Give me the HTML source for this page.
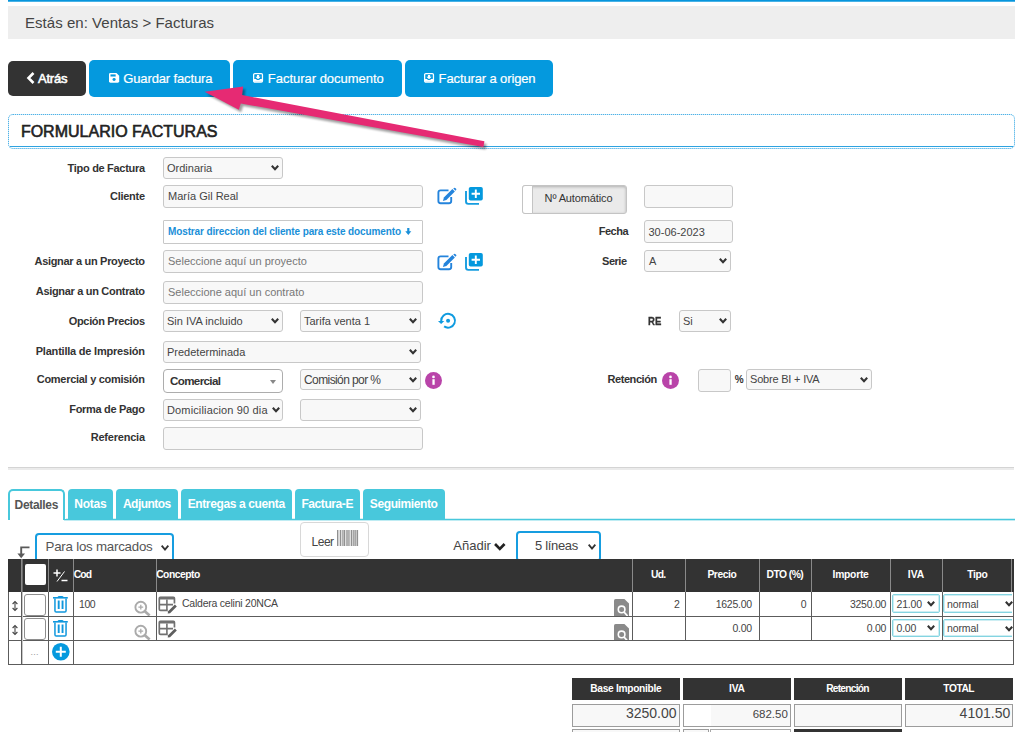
<!DOCTYPE html>
<html lang="es">
<head>
<meta charset="utf-8">
<title>Formulario Facturas</title>
<style>
*{box-sizing:border-box;margin:0;padding:0}
html,body{width:1024px;height:732px;overflow:hidden;background:#fff}
body{font-family:"Liberation Sans",sans-serif;color:#444;position:relative}
.a{position:absolute}
.t{position:absolute;white-space:nowrap;line-height:1}
svg{display:block;overflow:visible}
</style>
</head>
<body>

<div class="a" style="left:8px;top:0px;width:1007px;height:1px;background:#0795dc"></div>
<div class="a" style="left:8px;top:1px;width:1007px;height:1px;background:#47b2e6"></div>
<div class="a" style="left:8px;top:6px;width:1007px;height:33px;background:#eee"></div>
<div class="t" id="crumbtxt" style="top:14.70px;font-size:15px;color:#444;letter-spacing:0.038px;left:25px;">Estás en: Ventas &gt; Facturas</div>
<div class="a" style="left:8px;top:61px;width:78px;height:35px;background:#333;border-radius:5px"></div>
<div class="a" style="left:89px;top:60px;width:141px;height:37px;background:#0499de;border-radius:5px"></div>
<div class="a" style="left:233px;top:60px;width:169px;height:37px;background:#0499de;border-radius:5px"></div>
<div class="a" style="left:405px;top:60px;width:148px;height:37px;background:#0499de;border-radius:5px"></div>
<svg class="a" style="left:26px;top:72px;width:9px;height:12px" viewBox="0 0 9 12"><path d="M7.5 1 L2.5 6 L7.5 11" fill="none" stroke="#fff" stroke-width="2.6"/></svg>
<div class="t" id="b0" style="top:72.00px;font-size:13px;color:#fff;letter-spacing:-0.211px;left:38px;-webkit-text-stroke:0.55px #fff;">Atrás</div>
<svg class="a" style="left:108.6px;top:72.8px;width:10.2px;height:9.7px" viewBox="0 0 11 11" preserveAspectRatio="none"><path d="M1.5 0 H8 L11 3 V9.5 Q11 11 9.5 11 H1.5 Q0 11 0 9.5 V1.5 Q0 0 1.5 0 Z" fill="#fff"/><rect x="1.6" y="1.6" width="5.6" height="2.4" fill="#0499de"/><circle cx="5.5" cy="7.4" r="1.7" fill="#0499de"/></svg>
<div class="t" id="b1" style="top:71.70px;font-size:13px;color:#fff;letter-spacing:-0.128px;left:123.25px;-webkit-text-stroke:0.2px #fff;">Guardar factura</div>
<svg class="a" style="left:253.1px;top:72.9px;width:10.1px;height:9.7px" viewBox="0 0 11 11" preserveAspectRatio="none"><rect x="0.7" y="0.7" width="9.6" height="9.6" rx="1.3" fill="none" stroke="#fff" stroke-width="1.4"/><path d="M5.5 7.2 L2.6 4.2 H4.3 V2.4 H6.7 V4.2 H8.4 Z" fill="#fff"/><path d="M1 6.8 H3.4 L4.2 8 H6.8 L7.6 6.8 H10 V10 H1 Z" fill="#fff"/></svg>
<div class="t" id="b2" style="top:71.70px;font-size:13px;color:#fff;letter-spacing:-0.02px;left:267.8px;-webkit-text-stroke:0.2px #fff;">Facturar documento</div>
<svg class="a" style="left:424.2px;top:72.9px;width:10.1px;height:9.7px" viewBox="0 0 11 11" preserveAspectRatio="none"><rect x="0.7" y="0.7" width="9.6" height="9.6" rx="1.3" fill="none" stroke="#fff" stroke-width="1.4"/><path d="M5.5 7.2 L2.6 4.2 H4.3 V2.4 H6.7 V4.2 H8.4 Z" fill="#fff"/><path d="M1 6.8 H3.4 L4.2 8 H6.8 L7.6 6.8 H10 V10 H1 Z" fill="#fff"/></svg>
<div class="t" id="b3" style="top:71.70px;font-size:13px;color:#fff;letter-spacing:-0.125px;left:438.6px;-webkit-text-stroke:0.2px #fff;">Facturar a origen</div>
<div class="a" style="left:8px;top:114px;width:1007px;height:35px;border:1px solid rgba(70,175,232,0.28);border-radius:5px;"></div>
<div class="a" style="left:8px;top:114px;width:1007px;height:35px;border:1px dotted #4fb2e6;border-radius:5px;"></div>
<div class="a" style="left:10px;top:146px;width:1003px;height:1px;background:#2fa3e0"></div>
<div class="t" id="formtitle" style="top:123.96px;font-size:16px;color:#222;letter-spacing:0.007px;left:20.9px;-webkit-text-stroke:0.6px #222;">FORMULARIO FACTURAS</div>
<svg class="a" style="left:0;top:0;width:1024px;height:200px" viewBox="0 0 1024 200"><path d="M204.6 91.8 L243.1 86.4 L242.2 95 L484.4 141.3 L483.4 146.9 L240.8 103.4 L238.8 109.7 Z" fill="#000" opacity="0.38" transform="translate(2.3,2.6)" style="filter:blur(1.2px)"/><path d="M204.6 91.8 L243.1 86.4 L242.2 95 L484.4 141.3 L483.4 146.9 L240.8 103.4 L238.8 109.7 Z" fill="#e62a73"/></svg>
<div class="t" style="top:162.69px;font-size:11px;color:#333;font-weight:bold;letter-spacing:-0.307px;right:879.307px;">Tipo de Factura</div>
<div class="a" style="left:163px;top:157px;width:120px;height:22px;background:#f8f8f8;border:1px solid #c8c8c8;border-radius:3px;"></div>
<div class="t" style="top:162.65px;font-size:11px;color:#444;letter-spacing:0px;left:167px;">Ordinaria</div>
<svg class="a" style="left:270.50px;top:165.40px;width:8px;height:5.2px" viewBox="0 0 8 5.2"><path d="M0.80 0.80 L4.00 4.16 L7.20 0.80" fill="none" stroke="#333" stroke-width="2.1"/></svg>
<div class="t" style="top:190.69px;font-size:11px;color:#333;font-weight:bold;letter-spacing:-0.279px;right:879.279px;">Cliente</div>
<div class="a" style="left:163px;top:185px;width:260px;height:23px;background:#f8f8f8;border:1px solid #c8c8c8;border-radius:3px;"></div>
<div class="t" style="top:191.15px;font-size:11px;color:#444;letter-spacing:0px;left:168px;">María Gil Real</div>
<div class="a" style="left:163px;top:220px;width:260px;height:24px;background:#fff;border:1px solid #c8c8c8;border-radius:1px;"></div>
<div class="t" style="top:227.13px;font-size:10px;color:#1a8fd8;font-weight:bold;letter-spacing:-0.124px;left:168px;">Mostrar direccion del cliente para este documento</div>
<svg class="a" style="left:405px;top:228.3px;width:6.6px;height:7px" viewBox="0 0 6 7"><path d="M3 0 V4" stroke="#1a8fd8" stroke-width="2.2"/><path d="M0 3.2 H6 L3 7 Z" fill="#1a8fd8"/></svg>
<div class="t" style="top:255.69px;font-size:11px;color:#333;font-weight:bold;letter-spacing:-0.313px;right:879.313px;">Asignar a un Proyecto</div>
<div class="a" style="left:163px;top:250px;width:260px;height:23px;background:#f8f8f8;border:1px solid #c8c8c8;border-radius:3px;"></div>
<div class="t" style="top:256.15px;font-size:11px;color:#777;letter-spacing:0px;left:168px;">Seleccione aquí un proyecto</div>
<div class="t" style="top:286.44px;font-size:11px;color:#333;font-weight:bold;letter-spacing:-0.313px;right:879.313px;">Asignar a un Contrato</div>
<div class="a" style="left:163px;top:281px;width:260px;height:23px;background:#f8f8f8;border:1px solid #c8c8c8;border-radius:3px;"></div>
<div class="t" style="top:287.15px;font-size:11px;color:#777;letter-spacing:0px;left:168px;">Seleccione aquí un contrato</div>
<div class="t" style="top:315.69px;font-size:11px;color:#333;font-weight:bold;letter-spacing:-0.342px;right:879.342px;">Opción Precios</div>
<div class="a" style="left:163px;top:310px;width:120px;height:22px;background:#f8f8f8;border:1px solid #c8c8c8;border-radius:3px;"></div>
<div class="t" style="top:315.65px;font-size:11px;color:#444;letter-spacing:0px;left:167px;">Sin IVA incluido</div>
<svg class="a" style="left:270.50px;top:318.40px;width:8px;height:5.2px" viewBox="0 0 8 5.2"><path d="M0.80 0.80 L4.00 4.16 L7.20 0.80" fill="none" stroke="#333" stroke-width="2.1"/></svg>
<div class="a" style="left:300px;top:310px;width:121px;height:22px;background:#f8f8f8;border:1px solid #c8c8c8;border-radius:3px;"></div>
<div class="t" style="top:315.65px;font-size:11px;color:#444;letter-spacing:0px;left:304px;">Tarifa venta 1</div>
<svg class="a" style="left:408.50px;top:318.40px;width:8px;height:5.2px" viewBox="0 0 8 5.2"><path d="M0.80 0.80 L4.00 4.16 L7.20 0.80" fill="none" stroke="#333" stroke-width="2.1"/></svg>
<div class="t" style="top:346.44px;font-size:11px;color:#333;font-weight:bold;letter-spacing:-0.212px;right:879.212px;">Plantilla de Impresión</div>
<div class="a" style="left:163px;top:341px;width:258px;height:22px;background:#f8f8f8;border:1px solid #c8c8c8;border-radius:3px;"></div>
<div class="t" style="top:346.65px;font-size:11px;color:#444;letter-spacing:0px;left:167px;">Predeterminada</div>
<svg class="a" style="left:408.50px;top:349.40px;width:8px;height:5.2px" viewBox="0 0 8 5.2"><path d="M0.80 0.80 L4.00 4.16 L7.20 0.80" fill="none" stroke="#333" stroke-width="2.1"/></svg>
<div class="t" style="top:373.94px;font-size:11px;color:#333;font-weight:bold;letter-spacing:-0.287px;right:879.287px;">Comercial y comisión</div>
<div class="a" style="left:163px;top:369px;width:120px;height:24px;background:#fff;border:1px solid #adadad;border-radius:4px"></div>
<div class="t" style="top:375.18px;font-size:11.6px;color:#333;font-weight:bold;letter-spacing:-0.636px;left:170px;">Comercial</div>
<svg class="a" style="left:270px;top:379.5px;width:6px;height:4px" viewBox="0 0 6 4"><path d="M0 0 H6 L3 4 Z" fill="#888"/></svg>
<div class="a" style="left:300px;top:369px;width:121px;height:21px;background:#f8f8f8;border:1px solid #c8c8c8;border-radius:3px;"></div>
<div class="t" style="top:373.84px;font-size:12px;color:#444;letter-spacing:-0.592px;left:304px;">Comisión por %</div>
<svg class="a" style="left:408.50px;top:376.90px;width:8px;height:5.2px" viewBox="0 0 8 5.2"><path d="M0.80 0.80 L4.00 4.16 L7.20 0.80" fill="none" stroke="#333" stroke-width="2.1"/></svg>
<div class="t" style="top:404.44px;font-size:11px;color:#333;font-weight:bold;letter-spacing:-0.309px;right:879.309px;">Forma de Pago</div>
<div class="a" style="left:163px;top:399px;width:120px;height:22px;background:#f8f8f8;border:1px solid #c8c8c8;border-radius:3px;"></div>
<div class="t" style="top:404.65px;font-size:11px;color:#444;letter-spacing:0.141px;left:167px;">Domiciliacion 90 dia</div>
<svg class="a" style="left:271.50px;top:407.40px;width:8px;height:5.2px" viewBox="0 0 8 5.2"><path d="M0.80 0.80 L4.00 4.16 L7.20 0.80" fill="none" stroke="#333" stroke-width="2.1"/></svg>
<div class="a" style="left:300px;top:399px;width:121px;height:22px;background:#f8f8f8;border:1px solid #c8c8c8;border-radius:3px;"></div>
<svg class="a" style="left:408.50px;top:407.40px;width:8px;height:5.2px" viewBox="0 0 8 5.2"><path d="M0.80 0.80 L4.00 4.16 L7.20 0.80" fill="none" stroke="#333" stroke-width="2.1"/></svg>
<div class="t" style="top:431.94px;font-size:11px;color:#333;font-weight:bold;letter-spacing:-0.223px;right:879.223px;">Referencia</div>
<div class="a" style="left:163px;top:427px;width:260px;height:23px;background:#f8f8f8;border:1px solid #c8c8c8;border-radius:3px;"></div>
<svg class="a" style="left:437.4px;top:187.2px;width:20px;height:18px" viewBox="0 0 20 18"><path d="M11.5 3.4 H3.6 Q1.4 3.4 1.4 5.6 V14 Q1.4 16.2 3.6 16.2 H12 Q14.2 16.2 14.2 14 V10" fill="none" stroke="#2484dc" stroke-width="1.9"/><path d="M5.9 14 L6.9 10.5 L15.4 2 L17.9 4.5 L9.4 13 Z" fill="#2484dc"/><path d="M16.3 1.6 L17 0.9 Q17.6 0.4 18.2 0.9 L19.1 1.8 Q19.6 2.4 19.1 3 L18.4 3.7 Z" fill="#2484dc"/></svg>
<svg class="a" style="left:464.6px;top:186.9px;width:18px;height:18px" viewBox="0 0 18 18"><path d="M1 4 V14.6 Q1 16.9 3.3 16.9 H14" fill="none" stroke="#169de0" stroke-width="1.9"/><rect x="3.8" y="0" width="14" height="13.6" rx="1.8" fill="#0499de"/><path d="M10.8 2.6 V11 M6.6 6.8 H15" stroke="#fff" stroke-width="1.9"/></svg>
<svg class="a" style="left:437.4px;top:252.8px;width:20px;height:18px" viewBox="0 0 20 18"><path d="M11.5 3.4 H3.6 Q1.4 3.4 1.4 5.6 V14 Q1.4 16.2 3.6 16.2 H12 Q14.2 16.2 14.2 14 V10" fill="none" stroke="#2484dc" stroke-width="1.9"/><path d="M5.9 14 L6.9 10.5 L15.4 2 L17.9 4.5 L9.4 13 Z" fill="#2484dc"/><path d="M16.3 1.6 L17 0.9 Q17.6 0.4 18.2 0.9 L19.1 1.8 Q19.6 2.4 19.1 3 L18.4 3.7 Z" fill="#2484dc"/></svg>
<svg class="a" style="left:464.6px;top:252.5px;width:18px;height:18px" viewBox="0 0 18 18"><path d="M1 4 V14.6 Q1 16.9 3.3 16.9 H14" fill="none" stroke="#169de0" stroke-width="1.9"/><rect x="3.8" y="0" width="14" height="13.6" rx="1.8" fill="#0499de"/><path d="M10.8 2.6 V11 M6.6 6.8 H15" stroke="#fff" stroke-width="1.9"/></svg>
<svg class="a" style="left:437px;top:312px;width:20px;height:18px" viewBox="0 0 20 18"><path d="M4.18 8.9 A6.9 6.9 0 1 1 7.12 14.38" fill="none" stroke="#0f9be0" stroke-width="2"/><path d="M1 8.9 H7.3 L4.1 12 Z" fill="#0f9be0"/><circle cx="11.08" cy="8.73" r="2" fill="#0f9be0"/></svg>
<svg class="a" style="left:424.9px;top:371.6px;width:17px;height:17px" viewBox="0 0 17 17"><circle cx="8.5" cy="8.5" r="8.5" fill="#b944a9"/><rect x="7.4" y="7.2" width="2.3" height="5.6" fill="#fff"/><circle cx="8.5" cy="4.9" r="1.35" fill="#fff"/></svg>
<div class="a" style="left:522.3px;top:185px;width:105px;height:28.5px;background:#eaeaea;border:1px solid #c4c4c4;border-radius:3px;box-shadow:inset 0 1px 3px rgba(0,0,0,.25)"></div>
<div class="a" style="left:522.3px;top:185px;width:10.5px;height:28.5px;background:#fff;border:1px solid #c4c4c4;border-radius:3px 0 0 3px"></div>
<div class="t" style="top:193.29px;font-size:11px;color:#333;letter-spacing:-0.12px;left:578.5400000000001px;transform:translateX(-50%);">Nº Automático</div>
<div class="a" style="left:644px;top:185px;width:89px;height:23px;background:#f8f8f8;border:1px solid #c8c8c8;border-radius:3px;"></div>
<div class="t" style="top:225.69px;font-size:11px;color:#333;font-weight:bold;letter-spacing:-0.495px;right:395.995px;">Fecha</div>
<div class="a" style="left:644px;top:220px;width:89px;height:23px;background:#f8f8f8;border:1px solid #c8c8c8;border-radius:3px;"></div>
<div class="t" style="top:226.59px;font-size:11px;color:#444;letter-spacing:0px;left:648.5px;">30-06-2023</div>
<div class="t" style="top:255.69px;font-size:11px;color:#333;font-weight:bold;letter-spacing:-0.495px;right:397.495px;">Serie</div>
<div class="a" style="left:644px;top:250px;width:87px;height:22px;background:#f8f8f8;border:1px solid #c8c8c8;border-radius:3px;"></div>
<div class="t" style="top:255.65px;font-size:11px;color:#444;letter-spacing:0px;left:649px;">A</div>
<svg class="a" style="left:718.50px;top:258.40px;width:8px;height:5.2px" viewBox="0 0 8 5.2"><path d="M0.80 0.80 L4.00 4.16 L7.20 0.80" fill="none" stroke="#333" stroke-width="2.1"/></svg>
<div class="t" style="top:315.69px;font-size:11px;color:#333;font-weight:bold;letter-spacing:0px;right:362.70000000000005px;transform:scaleX(0.87);transform-origin:right center;-webkit-text-stroke:0.3px #333;">RE</div>
<div class="a" style="left:679px;top:310px;width:52px;height:22px;background:#f8f8f8;border:1px solid #c8c8c8;border-radius:3px;"></div>
<div class="t" style="top:315.65px;font-size:11px;color:#444;letter-spacing:0px;left:683px;">Si</div>
<svg class="a" style="left:718.50px;top:318.40px;width:8px;height:5.2px" viewBox="0 0 8 5.2"><path d="M0.80 0.80 L4.00 4.16 L7.20 0.80" fill="none" stroke="#333" stroke-width="2.1"/></svg>
<div class="t" style="top:374.44px;font-size:11px;color:#333;font-weight:bold;letter-spacing:-0.434px;right:367.2339999999999px;">Retención</div>
<svg class="a" style="left:662.1px;top:371.8px;width:17px;height:17px" viewBox="0 0 17 17"><circle cx="8.5" cy="8.5" r="8.5" fill="#b944a9"/><rect x="7.4" y="7.2" width="2.3" height="5.6" fill="#fff"/><circle cx="8.5" cy="4.9" r="1.35" fill="#fff"/></svg>
<div class="a" style="left:698px;top:369px;width:33px;height:23px;background:#f8f8f8;border:1px solid #c8c8c8;border-radius:3px;"></div>
<div class="t" style="top:375.29px;font-size:10px;color:#333;font-weight:bold;letter-spacing:0px;left:734.7px;">%</div>
<div class="a" style="left:746px;top:369px;width:126px;height:21px;background:#f8f8f8;border:1px solid #c8c8c8;border-radius:3px;"></div>
<div class="t" style="top:374.44px;font-size:11px;color:#444;letter-spacing:-0.196px;left:750px;">Sobre BI + IVA</div>
<svg class="a" style="left:859.50px;top:376.90px;width:8px;height:5.2px" viewBox="0 0 8 5.2"><path d="M0.80 0.80 L4.00 4.16 L7.20 0.80" fill="none" stroke="#333" stroke-width="2.1"/></svg>
<div class="a" style="left:8px;top:467px;width:1006px;height:1px;background:#d4d4d4"></div>
<div class="a" style="left:8px;top:468px;width:1006px;height:2px;background:#ebebeb"></div>
<div class="a" style="left:8px;top:489px;width:57px;height:31px;background:#fff;border:2px solid #48c8dc;border-bottom:none;border-radius:5px 5px 0 0"></div>
<div class="a" style="left:64px;top:519px;width:951px;height:1px;background:#48c8dc"></div>
<div class="a" style="left:64px;top:520px;width:951px;height:1px;background:rgba(72,200,220,0.35)"></div>
<div class="a" style="left:66px;top:518px;width:949px;height:1px;background:rgba(72,200,220,0.25)"></div>
<div class="t" style="top:498.64px;font-size:12px;color:#555;font-weight:bold;letter-spacing:-0.325px;left:36.3375px;transform:translateX(-50%);">Detalles</div>
<div class="a" style="left:68px;top:489px;width:45px;height:30px;background:#48c8dc;border-radius:4px 4px 0 0"></div>
<div class="t" style="top:498.44px;font-size:12px;color:#fff;font-weight:bold;letter-spacing:-0.21px;left:90.395px;transform:translateX(-50%);">Notas</div>
<div class="a" style="left:116.2px;top:489px;width:61.8px;height:30px;background:#48c8dc;border-radius:4px 4px 0 0"></div>
<div class="t" style="top:498.44px;font-size:12px;color:#fff;font-weight:bold;letter-spacing:-0.535px;left:146.83249999999998px;transform:translateX(-50%);">Adjuntos</div>
<div class="a" style="left:181.2px;top:489px;width:110.4px;height:30px;background:#48c8dc;border-radius:4px 4px 0 0"></div>
<div class="t" style="top:498.44px;font-size:12px;color:#fff;font-weight:bold;letter-spacing:-0.367px;left:236.21649999999997px;transform:translateX(-50%);">Entregas a cuenta</div>
<div class="a" style="left:294.9px;top:489px;width:65.1px;height:30px;background:#48c8dc;border-radius:4px 4px 0 0"></div>
<div class="t" style="top:498.44px;font-size:12px;color:#fff;font-weight:bold;letter-spacing:-0.419px;left:327.2405px;transform:translateX(-50%);">Factura-E</div>
<div class="a" style="left:363px;top:489px;width:81.7px;height:30px;background:#48c8dc;border-radius:4px 4px 0 0"></div>
<div class="t" style="top:498.44px;font-size:12px;color:#fff;font-weight:bold;letter-spacing:-0.401px;left:403.64950000000005px;transform:translateX(-50%);">Seguimiento</div>
<svg class="a" style="left:16px;top:546px;width:14px;height:13px" viewBox="0 0 14 13"><path d="M13.5 1.4 H5.2 V8" fill="none" stroke="#5a5a5a" stroke-width="1.9"/><path d="M1.4 7.4 H9 L5.2 12.3 Z" fill="#5a5a5a"/></svg>
<div class="a" style="left:35px;top:532.5px;width:139px;height:30px;background:#fff;border:2px solid #169de0;border-radius:4px"></div>
<div class="t" style="top:540.04px;font-size:13.3px;color:#555;letter-spacing:-0.224px;left:45.5px;">Para los marcados</div>
<svg class="a" style="left:160.60px;top:544.55px;width:8px;height:5.5px" viewBox="0 0 8 5.5"><path d="M0.68 0.68 L4.00 4.61 L7.32 0.68" fill="none" stroke="#333" stroke-width="1.8"/></svg>
<div class="a" style="left:300px;top:522px;width:69px;height:35px;background:#fff;border:1px solid #d8d8d8;border-radius:4px"></div>
<div class="t" style="top:536.34px;font-size:12px;color:#444;letter-spacing:-0.473px;left:311.5px;">Leer</div>
<svg class="a" style="left:337.1px;top:529.8px;width:21.3px;height:16px" viewBox="0 0 21.3 16"><rect x="0" y="0" width="1" height="16" fill="#909090"/><rect x="1.6" y="0" width="0.6" height="16" fill="#909090"/><rect x="2.9" y="0" width="1.4" height="16" fill="#909090"/><rect x="5" y="0" width="0.7" height="16" fill="#909090"/><rect x="6.4" y="0" width="1.8" height="16" fill="#909090"/><rect x="8.9" y="0" width="0.8" height="16" fill="#909090"/><rect x="10.3" y="0" width="1.4" height="16" fill="#909090"/><rect x="12.4" y="0" width="0.7" height="16" fill="#909090"/><rect x="13.8" y="0" width="1.6" height="16" fill="#909090"/><rect x="16" y="0" width="0.8" height="16" fill="#909090"/><rect x="17.4" y="0" width="1.4" height="16" fill="#909090"/><rect x="19.5" y="0" width="1.6" height="16" fill="#909090"/></svg>
<div class="t" style="top:538.70px;font-size:13px;color:#444;letter-spacing:0px;left:453.3px;">Añadir</div>
<svg class="a" style="left:494.40px;top:542.60px;width:11.6px;height:7.2px" viewBox="0 0 11.6 7.2"><path d="M1.03 1.03 L5.80 5.87 L10.57 1.03" fill="none" stroke="#222" stroke-width="2.7"/></svg>
<div class="a" style="left:516px;top:531px;width:85px;height:31px;background:#fff;border:2px solid #169de0;border-radius:4px"></div>
<div class="t" style="top:539.00px;font-size:13px;color:#444;letter-spacing:-0.333px;left:535px;">5 líneas</div>
<svg class="a" style="left:588.20px;top:543.65px;width:8px;height:5.5px" viewBox="0 0 8 5.5"><path d="M0.68 0.68 L4.00 4.61 L7.32 0.68" fill="none" stroke="#333" stroke-width="1.8"/></svg>
<div class="a" style="left:8px;top:559px;width:1006px;height:33px;background:#333"></div>
<div class="a" style="left:20.6px;top:559px;width:1px;height:33px;background:#8a8a8a"></div>
<div class="a" style="left:47.9px;top:559px;width:1px;height:33px;background:#8a8a8a"></div>
<div class="a" style="left:72.7px;top:559px;width:1px;height:33px;background:#8a8a8a"></div>
<div class="a" style="left:156.0px;top:559px;width:1px;height:33px;background:#8a8a8a"></div>
<div class="a" style="left:632.2px;top:559px;width:1px;height:33px;background:#8a8a8a"></div>
<div class="a" style="left:685.0px;top:559px;width:1px;height:33px;background:#8a8a8a"></div>
<div class="a" style="left:758.9px;top:559px;width:1px;height:33px;background:#8a8a8a"></div>
<div class="a" style="left:811.0px;top:559px;width:1px;height:33px;background:#8a8a8a"></div>
<div class="a" style="left:889.9px;top:559px;width:1px;height:33px;background:#8a8a8a"></div>
<div class="a" style="left:942.1px;top:559px;width:1px;height:33px;background:#8a8a8a"></div>
<div class="a" style="left:1011px;top:559px;width:1px;height:33px;background:#8a8a8a"></div>
<div class="a" style="left:24.6px;top:564.3px;width:21px;height:21.2px;background:#fff;border-radius:2px"></div>
<svg class="a" style="left:53px;top:569px;width:15px;height:13px" viewBox="0 0 15 13"><path d="M4 0.5 V7.5 M0.5 4 H7.5" stroke="#fff" stroke-width="1.5"/><path d="M11.5 2.5 L4 12.5" stroke="#fff" stroke-width="1"/><path d="M8.5 11.5 H14.5" stroke="#fff" stroke-width="1.5"/></svg>
<div class="t" style="top:569.58px;font-size:10.3px;color:#fff;font-weight:bold;letter-spacing:-0.911px;left:73.8px;">Cod</div>
<div class="t" style="top:569.58px;font-size:10.3px;color:#fff;font-weight:bold;letter-spacing:-0.499px;left:156.2px;">Concepto</div>
<div class="t" style="top:569.58px;font-size:10.3px;color:#fff;font-weight:bold;letter-spacing:-0.646px;left:658.277px;transform:translateX(-50%);">Ud.</div>
<div class="t" style="top:569.58px;font-size:10.3px;color:#fff;font-weight:bold;letter-spacing:-0.418px;left:721.8910000000001px;transform:translateX(-50%);">Precio</div>
<div class="t" style="top:569.58px;font-size:10.3px;color:#fff;font-weight:bold;letter-spacing:-0.539px;left:784.8305px;transform:translateX(-50%);">DTO (%)</div>
<div class="t" style="top:569.58px;font-size:10.3px;color:#fff;font-weight:bold;letter-spacing:-0.245px;left:850.5775000000001px;transform:translateX(-50%);">Importe</div>
<div class="t" style="top:569.58px;font-size:10.3px;color:#fff;font-weight:bold;letter-spacing:0.047px;left:916.0235px;transform:translateX(-50%);">IVA</div>
<div class="t" style="top:569.58px;font-size:10.3px;color:#fff;font-weight:bold;letter-spacing:-0.384px;left:977.308px;transform:translateX(-50%);">Tipo</div>
<svg class="a" style="left:11.7px;top:600.7px;width:6px;height:10px" viewBox="0 0 6 10"><path d="M3 1 V9" stroke="#444" stroke-width="1.1"/><path d="M0.6 3 L3 0.5 L5.4 3 M0.6 7 L3 9.5 L5.4 7" fill="none" stroke="#444" stroke-width="1.1"/></svg>
<div class="a" style="left:24px;top:593.6px;width:22px;height:22px;background:#fff;border:1px solid #8e8e8e;border-radius:3px"></div>
<svg class="a" style="left:53.3px;top:595.75px;width:14.8px;height:16.8px" viewBox="0 0 14.8 16.8"><path d="M4.5 1.4 Q4.7 0 6.2 0 H8.8 Q10.5 0 10.8 1.4 Z" fill="#0f97dd"/><path d="M0 1.8 H14.8" stroke="#0f97dd" stroke-width="1.6"/><path d="M1.95 2.4 V14.7 Q1.95 15.95 3.2 15.95 H11.8 Q13.05 15.95 13.05 14.7 V2.4" fill="none" stroke="#0f97dd" stroke-width="1.5"/><path d="M5.7 4.6 V12.9 M9.55 4.6 V12.9" stroke="#0f97dd" stroke-width="1.9"/></svg>
<div class="t" style="top:598.71px;font-size:10.5px;color:#444;letter-spacing:-0.46px;left:79.1px;">100</div>
<svg class="a" style="left:134px;top:600.6px;width:17px;height:16px" viewBox="0 0 17 16"><circle cx="6.8" cy="6.2" r="5.4" fill="none" stroke="#aaaaaa" stroke-width="1.9"/><path d="M6.8 3.8 V8.6 M4.4 6.2 H9.2" stroke="#aaaaaa" stroke-width="1.3"/><path d="M10.8 10.2 L15.6 14.6" stroke="#aaaaaa" stroke-width="2.7"/></svg>
<svg class="a" style="left:157.5px;top:596px;width:19px;height:18px" viewBox="0 0 19 18"><path d="M16.45 7.6 V2.6 Q16.45 1.35 15.2 1.35 H2.55 Q1.3 1.35 1.3 2.6 V13.15 Q1.3 14.4 2.55 14.4 H9.6" fill="none" stroke="#717171" stroke-width="1.7"/><path d="M1.3 0.9 H16.45 V3.5 H1.3 Z" fill="#717171"/><path d="M1.3 8.65 H15 M8.9 3.4 V14.4" stroke="#717171" stroke-width="1.6"/><path d="M9.7 17.6 L10.1 15.2 L16.9 8.6 L18.8 10.5 L12.1 17.2 Z" fill="#5e5e5e"/></svg>
<div class="t" style="top:597.81px;font-size:10.5px;color:#444;letter-spacing:-0.231px;left:182px;">Caldera celini 20NCA</div>
<svg class="a" style="left:614px;top:599.2px;width:15px;height:17.3px;overflow:hidden" viewBox="0 0 15 17.3"><path d="M1.6 0 H10.4 L15 4.6 V17.5 H0 V1.6 Q0 0 1.6 0 Z" fill="#8a8a8a"/><circle cx="7.6" cy="10.4" r="3.3" fill="none" stroke="#fff" stroke-width="1.6"/><path d="M10 13 L13.6 17" stroke="#fff" stroke-width="1.8"/></svg>
<div class="t" style="top:598.71px;font-size:10.5px;color:#444;letter-spacing:0px;right:344.1px;">2</div>
<div class="t" style="top:598.71px;font-size:10.5px;color:#444;letter-spacing:-0.25px;right:272.1px;">1625.00</div>
<div class="t" style="top:598.71px;font-size:10.5px;color:#444;letter-spacing:0px;right:217.29999999999995px;">0</div>
<div class="t" style="top:598.71px;font-size:10.5px;color:#444;letter-spacing:-0.25px;right:137.89999999999998px;">3250.00</div>
<div class="a" style="left:892px;top:594px;width:48px;height:19px;background:#fff;border:1px solid #84d4e1;box-shadow:inset 0 0 0 1px rgba(132,212,225,0.4);border-radius:2px;"></div>
<div class="t" style="top:598.71px;font-size:10.5px;color:#444;letter-spacing:-0.2px;left:896.5px;">21.00</div>
<svg class="a" style="left:927.00px;top:600.90px;width:8px;height:5.2px" viewBox="0 0 8 5.2"><path d="M0.80 0.80 L4.00 4.16 L7.20 0.80" fill="none" stroke="#333" stroke-width="2.1"/></svg>
<div class="a" style="left:943px;top:594.2px;width:69px;height:18.8px;overflow:hidden"><div class="a" style="left:0;top:0;width:90px;height:100%;background:#fff;border:1px solid #84d4e1;box-shadow:inset 0 0 0 1px rgba(132,212,225,0.4);border-radius:2px;"></div></div>
<div class="t" style="top:598.71px;font-size:10.5px;color:#444;letter-spacing:-0.119px;left:947px;">normal</div>
<svg class="a" style="left:1004.50px;top:601.20px;width:8px;height:5.2px" viewBox="0 0 8 5.2"><path d="M0.80 0.80 L4.00 4.16 L7.20 0.80" fill="none" stroke="#333" stroke-width="2.1"/></svg>
<svg class="a" style="left:11.7px;top:625.0px;width:6px;height:10px" viewBox="0 0 6 10"><path d="M3 1 V9" stroke="#444" stroke-width="1.1"/><path d="M0.6 3 L3 0.5 L5.4 3 M0.6 7 L3 9.5 L5.4 7" fill="none" stroke="#444" stroke-width="1.1"/></svg>
<div class="a" style="left:24px;top:617.9px;width:22px;height:22px;background:#fff;border:1px solid #8e8e8e;border-radius:3px"></div>
<svg class="a" style="left:53.3px;top:620.05px;width:14.8px;height:16.8px" viewBox="0 0 14.8 16.8"><path d="M4.5 1.4 Q4.7 0 6.2 0 H8.8 Q10.5 0 10.8 1.4 Z" fill="#0f97dd"/><path d="M0 1.8 H14.8" stroke="#0f97dd" stroke-width="1.6"/><path d="M1.95 2.4 V14.7 Q1.95 15.95 3.2 15.95 H11.8 Q13.05 15.95 13.05 14.7 V2.4" fill="none" stroke="#0f97dd" stroke-width="1.5"/><path d="M5.7 4.6 V12.9 M9.55 4.6 V12.9" stroke="#0f97dd" stroke-width="1.9"/></svg>
<svg class="a" style="left:134px;top:624.9px;width:17px;height:16px" viewBox="0 0 17 16"><circle cx="6.8" cy="6.2" r="5.4" fill="none" stroke="#aaaaaa" stroke-width="1.9"/><path d="M6.8 3.8 V8.6 M4.4 6.2 H9.2" stroke="#aaaaaa" stroke-width="1.3"/><path d="M10.8 10.2 L15.6 14.6" stroke="#aaaaaa" stroke-width="2.7"/></svg>
<svg class="a" style="left:157.5px;top:620.3px;width:19px;height:18px" viewBox="0 0 19 18"><path d="M16.45 7.6 V2.6 Q16.45 1.35 15.2 1.35 H2.55 Q1.3 1.35 1.3 2.6 V13.15 Q1.3 14.4 2.55 14.4 H9.6" fill="none" stroke="#717171" stroke-width="1.7"/><path d="M1.3 0.9 H16.45 V3.5 H1.3 Z" fill="#717171"/><path d="M1.3 8.65 H15 M8.9 3.4 V14.4" stroke="#717171" stroke-width="1.6"/><path d="M9.7 17.6 L10.1 15.2 L16.9 8.6 L18.8 10.5 L12.1 17.2 Z" fill="#5e5e5e"/></svg>
<svg class="a" style="left:614px;top:623.5px;width:15px;height:17.3px;overflow:hidden" viewBox="0 0 15 17.3"><path d="M1.6 0 H10.4 L15 4.6 V17.5 H0 V1.6 Q0 0 1.6 0 Z" fill="#8a8a8a"/><circle cx="7.6" cy="10.4" r="3.3" fill="none" stroke="#fff" stroke-width="1.6"/><path d="M10 13 L13.6 17" stroke="#fff" stroke-width="1.8"/></svg>
<div class="t" style="top:623.01px;font-size:10.5px;color:#444;letter-spacing:-0.25px;right:272.1px;">0.00</div>
<div class="t" style="top:623.01px;font-size:10.5px;color:#444;letter-spacing:-0.25px;right:137.89999999999998px;">0.00</div>
<div class="a" style="left:892px;top:619px;width:48px;height:18px;background:#fff;border:1px solid #84d4e1;box-shadow:inset 0 0 0 1px rgba(132,212,225,0.4);border-radius:2px;"></div>
<div class="t" style="top:623.01px;font-size:10.5px;color:#444;letter-spacing:-0.2px;left:896.5px;">0.00</div>
<svg class="a" style="left:927.00px;top:625.40px;width:8px;height:5.2px" viewBox="0 0 8 5.2"><path d="M0.80 0.80 L4.00 4.16 L7.20 0.80" fill="none" stroke="#333" stroke-width="2.1"/></svg>
<div class="a" style="left:943px;top:618.5px;width:69px;height:18.8px;overflow:hidden"><div class="a" style="left:0;top:0;width:90px;height:100%;background:#fff;border:1px solid #84d4e1;box-shadow:inset 0 0 0 1px rgba(132,212,225,0.4);border-radius:2px;"></div></div>
<div class="t" style="top:623.01px;font-size:10.5px;color:#444;letter-spacing:-0.119px;left:947px;">normal</div>
<svg class="a" style="left:1004.50px;top:625.50px;width:8px;height:5.2px" viewBox="0 0 8 5.2"><path d="M0.80 0.80 L4.00 4.16 L7.20 0.80" fill="none" stroke="#333" stroke-width="2.1"/></svg>
<div class="t" style="top:647.68px;font-size:9px;color:#999;letter-spacing:0.3px;left:30.5px;">...</div>
<svg class="a" style="left:51.7px;top:643.4px;width:17.6px;height:17.6px" viewBox="0 0 17.6 17.6"><circle cx="8.8" cy="8.8" r="8.8" fill="#0499de"/><path d="M8.8 3.8 V13.8 M3.8 8.8 H13.8" stroke="#fff" stroke-width="2"/></svg>
<div class="a" style="left:8px;top:615.8px;width:1006px;height:1px;background:#5c5c5c"></div>
<div class="a" style="left:8px;top:640.0px;width:1006px;height:1px;background:#5c5c5c"></div>
<div class="a" style="left:8px;top:663.8px;width:1006px;height:1px;background:#5c5c5c"></div>
<div class="a" style="left:8px;top:592px;width:1px;height:72.29999999999995px;background:#5c5c5c"></div>
<div class="a" style="left:1013px;top:592px;width:1px;height:72.29999999999995px;background:#5c5c5c"></div>
<div class="a" style="left:20.6px;top:592px;width:1px;height:72.29999999999995px;background:#5c5c5c"></div>
<div class="a" style="left:47.9px;top:592px;width:1px;height:72.29999999999995px;background:#5c5c5c"></div>
<div class="a" style="left:72.7px;top:592px;width:1px;height:72.29999999999995px;background:#5c5c5c"></div>
<div class="a" style="left:156.0px;top:592px;width:1px;height:48.5px;background:#5c5c5c"></div>
<div class="a" style="left:632.2px;top:592px;width:1px;height:48.5px;background:#5c5c5c"></div>
<div class="a" style="left:685.0px;top:592px;width:1px;height:48.5px;background:#5c5c5c"></div>
<div class="a" style="left:758.9px;top:592px;width:1px;height:48.5px;background:#5c5c5c"></div>
<div class="a" style="left:811.0px;top:592px;width:1px;height:48.5px;background:#5c5c5c"></div>
<div class="a" style="left:889.9px;top:592px;width:1px;height:48.5px;background:#5c5c5c"></div>
<div class="a" style="left:942.1px;top:592px;width:1px;height:48.5px;background:#5c5c5c"></div>
<div class="a" style="left:22px;top:592px;width:1px;height:72.29999999999995px;background:#c8c8c8"></div>
<div class="a" style="left:22px;top:559px;width:1px;height:33px;background:#6a6a6a"></div>
<div class="a" style="left:571.7px;top:678.3px;width:108.5px;height:22px;background:#333"></div>
<div class="t" style="top:683.77px;font-size:10.2px;color:#fff;font-weight:bold;letter-spacing:-0.291px;left:625.8045000000001px;transform:translateX(-50%);">Base Imponible</div>
<div class="a" style="left:682.6px;top:678.3px;width:108.79999999999995px;height:22px;background:#333"></div>
<div class="t" style="top:683.77px;font-size:10.2px;color:#fff;font-weight:bold;letter-spacing:-0.173px;left:736.9135px;transform:translateX(-50%);">IVA</div>
<div class="a" style="left:793.8px;top:678.3px;width:108.10000000000002px;height:22px;background:#333"></div>
<div class="t" style="top:683.77px;font-size:10.2px;color:#fff;font-weight:bold;letter-spacing:-0.726px;left:847.4869999999999px;transform:translateX(-50%);">Retención</div>
<div class="a" style="left:904.7px;top:678.3px;width:108.5px;height:22px;background:#333"></div>
<div class="t" style="top:683.77px;font-size:10.2px;color:#fff;font-weight:bold;letter-spacing:-0.438px;left:958.731px;transform:translateX(-50%);">TOTAL</div>
<div class="a" style="left:571.7px;top:704px;width:108.5px;height:22.6px;background:#f8f8f8;border:1px solid #9c9c9c;"></div>
<div class="t" style="top:705.55px;font-size:14px;color:#444;letter-spacing:0px;right:347.5px;">3250.00</div>
<div class="a" style="left:682.6px;top:704px;width:108.8px;height:22.6px;background:#f8f8f8;border:1px solid #9c9c9c;"></div>
<div class="a" style="left:683.6px;top:705px;width:27.6px;height:20.6px;background:#fff"></div>
<div class="t" style="top:708.87px;font-size:11.5px;color:#444;letter-spacing:0px;right:236.20000000000005px;">682.50</div>
<div class="a" style="left:793.8px;top:704px;width:108.1px;height:22.6px;background:#f8f8f8;border:1px solid #9c9c9c;"></div>
<div class="a" style="left:904.7px;top:704px;width:108.5px;height:22.6px;background:#f8f8f8;border:1px solid #9c9c9c;"></div>
<div class="t" style="top:705.55px;font-size:14px;color:#444;letter-spacing:0px;right:13.799999999999955px;">4101.50</div>
<div class="a" style="left:571.7px;top:728.6px;width:108.5px;height:10px;background:#f8f8f8;border:1px solid #9c9c9c;"></div>
<div class="a" style="left:682.6px;top:728.6px;width:26.4px;height:10px;background:#f8f8f8;border:1px solid #9c9c9c;"></div>
<div class="a" style="left:710.4px;top:728.6px;width:81px;height:10px;background:#fff;border:1px solid #a8a8a8;"></div>
<div class="a" style="left:793.8px;top:728.8px;width:108.1px;height:10px;background:#333"></div>
</body>
</html>
